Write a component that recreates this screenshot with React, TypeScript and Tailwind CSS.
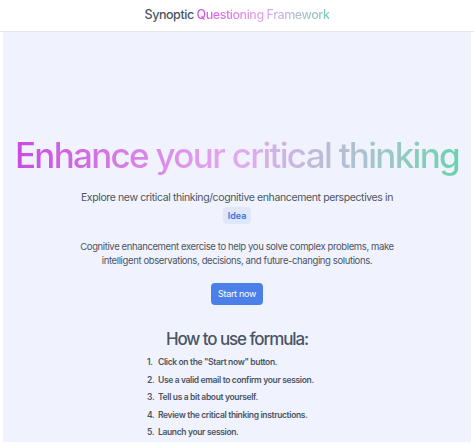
import React from "react";

const steps = [
  'Click on the "Start now" button.',
  "Use a valid email to confirm your session.",
  "Tell us a bit about yourself.",
  "Review the critical thinking instructions.",
  "Launch your session.",
];

export default function App() {
  return (
    <div className="w-[474px] h-[445px] bg-white overflow-hidden flex flex-col" style={{ fontFamily: "Inter, 'Noto Sans', sans-serif" }}>
      <header className="h-[32px] shrink-0 flex items-center justify-center border-b border-[#e5e7eb] bg-white">
        <h1 className="text-[12.5px] font-medium text-[#4b5563] tracking-[-0.45px]">
          Synoptic{" "}
          <span className="bg-gradient-to-r from-[#d44fdf] via-[#e6a6ee] to-[#6fcdb8] bg-clip-text text-transparent">
            Questioning Framework
          </span>
        </h1>
      </header>
      <main className="mx-[3px] mb-[3px] flex-1 bg-[#f0f3fe] flex flex-col items-center pt-[104px]">
        <h2 className="whitespace-nowrap text-[35px] leading-[38px] font-medium tracking-[-1.7px] bg-gradient-to-r from-[#c94ade] via-[#e2aaee] via-50% to-[#6bd2b0] bg-clip-text text-transparent pb-[4px]">
          Enhance your critical thinking
        </h2>
        <p className="mt-[13px] text-[10.5px] leading-[14px] tracking-[-0.38px] text-[#4b5563]">
          Explore new critical thinking/cognitive enhancement perspectives in
        </p>
        <span className="mt-[2px] rounded-[4px] bg-[#dfe7fb] px-[5px] py-[3px] text-[9px] leading-[11px] font-semibold text-[#3e73da]">
          Idea
        </span>
        <p className="mt-[16px] text-[9.5px] leading-[14px] tracking-[-0.38px] text-[#4b5563] text-center">
          Cognitive enhancement exercise to help you solve complex problems, make
          <br />
          intelligent observations, decisions, and future-changing solutions.
        </p>
        <button className="mt-[15px] h-[22px] px-[7px] rounded-[4px] bg-[#4c7fe8] text-white text-[9px] tracking-[-0.3px] leading-[22px]">
          Start now
        </button>
        <h3 className="mt-[23px] whitespace-nowrap text-[17px] leading-[22px] font-medium tracking-[-1.1px] text-[#4b5563]">How to use formula:</h3>
        <ol className="mt-[7px] self-start ml-[144px] flex flex-col gap-[6px]">
          {steps.map((s, i) => (
            <li key={i} className="text-[8.5px] leading-[11.5px] font-semibold tracking-[-0.35px] text-[#4b5563] flex">
              <span className="w-[10px]">{i + 1}.</span>
              <span className="ml-[1px]">{s}</span>
            </li>
          ))}
        </ol>
      </main>
    </div>
  );
}
